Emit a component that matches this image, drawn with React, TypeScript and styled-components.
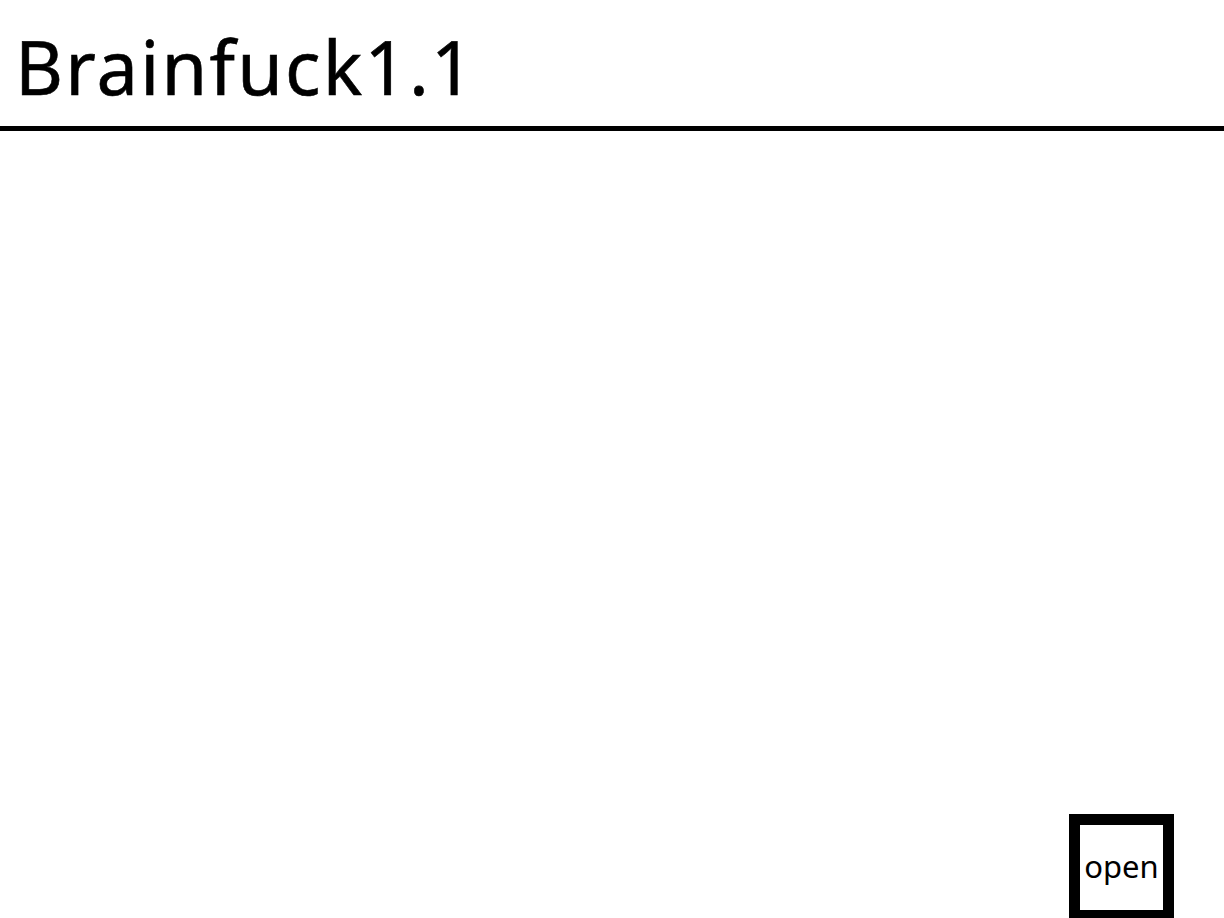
import React from "react";
import styled, { createGlobalStyle } from "styled-components";

const GlobalStyle = createGlobalStyle`
  html, body {
    margin: 0;
    padding: 0;
    background: #ffffff;
    font-family: "Noto Sans", "Open Sans", sans-serif;
  }
`;

const Page = styled.div`
  width: 100%;
  min-height: 918px;
  display: flex;
  flex-direction: column;
`;

const Header = styled.header`
  border-bottom: 5px solid #000;
  padding: 0 0 0 15px;
  height: 131px;
  box-sizing: border-box;
  display: flex;
  align-items: flex-start;
`;

const Title = styled.h1`
  margin: 0;
  font-family: "Noto Sans", sans-serif;
  font-weight: 400;
  font-size: 74px;
  letter-spacing: 2.2px;
  line-height: 140px;
  margin-top: -3px;
  color: #000;
  -webkit-text-stroke: 0.6px #000;
`;

const OpenButton = styled.button`
  position: fixed;
  right: 50px;
  bottom: -3px;
  width: 105px;
  height: 107px;
  box-sizing: border-box;
  border: 11px solid #000;
  background: #fff;
  padding: 0 0 4px 0;
  font-family: "Noto Sans", sans-serif;
  font-weight: 400;
  font-size: 31px;
  color: #000;
  cursor: pointer;
`;

export default function App() {
  return (
    <Page>
      <GlobalStyle />
      <Header>
        <Title>Brainfuck1.1</Title>
      </Header>
      <OpenButton>open</OpenButton>
    </Page>
  );
}
